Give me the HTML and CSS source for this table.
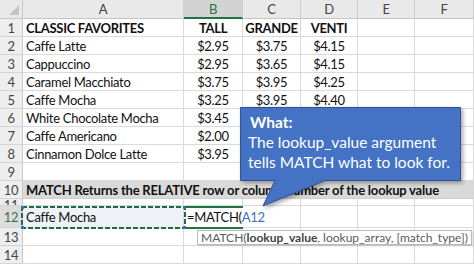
FILE: index.html
```html
<!DOCTYPE html>
<html>
<head>
<meta charset="utf-8">
<link rel="stylesheet" href="styles.css">
</head>
<body>
<div class="sheet">
  <div class="c corner"><svg class="tri" width="10" height="10" viewBox="0 0 10 10"><polygon points="10,0 10,10 0,10" fill="#c4c4c4"/></svg></div>
  <div class="c ch">A</div>
  <div class="c ch sel">B</div>
  <div class="c ch">C</div>
  <div class="c ch">D</div>
  <div class="c ch">E</div>
  <div class="c ch">F</div>

  <div class="c rh">1</div>
  <div class="c b">CLASSIC FAVORITES</div>
  <div class="c ctr b">TALL</div>
  <div class="c ctr b">GRANDE</div>
  <div class="c ctr b">VENTI</div>
  <div class="c"></div>
  <div class="c"></div>

  <div class="c rh">2</div>
  <div class="c">Caffe Latte</div>
  <div class="c ctr">$2.95</div>
  <div class="c ctr">$3.75</div>
  <div class="c ctr">$4.15</div>
  <div class="c"></div>
  <div class="c"></div>

  <div class="c rh">3</div>
  <div class="c">Cappuccino</div>
  <div class="c ctr">$2.95</div>
  <div class="c ctr">$3.65</div>
  <div class="c ctr">$4.15</div>
  <div class="c"></div>
  <div class="c"></div>

  <div class="c rh">4</div>
  <div class="c">Caramel Macchiato</div>
  <div class="c ctr">$3.75</div>
  <div class="c ctr">$3.95</div>
  <div class="c ctr">$4.25</div>
  <div class="c"></div>
  <div class="c"></div>

  <div class="c rh">5</div>
  <div class="c">Caffe Mocha</div>
  <div class="c ctr">$3.25</div>
  <div class="c ctr">$3.95</div>
  <div class="c ctr">$4.40</div>
  <div class="c"></div>
  <div class="c"></div>

  <div class="c rh">6</div>
  <div class="c">White Chocolate Mocha</div>
  <div class="c ctr">$3.45</div>
  <div class="c ctr"></div>
  <div class="c ctr"></div>
  <div class="c"></div>
  <div class="c"></div>

  <div class="c rh">7</div>
  <div class="c">Caffe Americano</div>
  <div class="c ctr">$2.00</div>
  <div class="c ctr"></div>
  <div class="c ctr"></div>
  <div class="c"></div>
  <div class="c"></div>

  <div class="c rh">8</div>
  <div class="c">Cinnamon Dolce Latte</div>
  <div class="c ctr">$3.95</div>
  <div class="c ctr"></div>
  <div class="c ctr"></div>
  <div class="c"></div>
  <div class="c"></div>

  <div class="c rh">9</div>
  <div class="c"></div>
  <div class="c"></div>
  <div class="c"></div>
  <div class="c"></div>
  <div class="c"></div>
  <div class="c"></div>

  <div class="c rh">10</div>
  <div class="c b band">MATCH Returns the RELATIVE row or column number of the lookup value</div>

  <div class="c rh tiny">11</div>
  <div class="c"></div>
  <div class="c"></div>
  <div class="c"></div>
  <div class="c"></div>
  <div class="c"></div>
  <div class="c"></div>

  <div class="c rh rsel">12</div>
  <div class="c ref">Caffe Mocha</div>
  <div class="c edit">=MATCH(<span class="refc">A12</span></div>
  <div class="c"></div>
  <div class="c"></div>
  <div class="c"></div>
  <div class="c"></div>

  <div class="c rh">13</div>
  <div class="c"></div>
  <div class="c"></div>
  <div class="c"></div>
  <div class="c"></div>
  <div class="c"></div>
  <div class="c"></div>

  <div class="c rh">14</div>
  <div class="c"></div>
  <div class="c"></div>
  <div class="c"></div>
  <div class="c"></div>
  <div class="c"></div>
  <div class="c"></div>

  <svg class="ants" width="170" height="30" viewBox="0 0 170 30">
    <rect x="1" y="1" width="163" height="21" fill="none" stroke="#1f6b46" stroke-width="2" stroke-dasharray="5 2"/>
    <rect x="0" y="0" width="3" height="3" fill="#3d6fc0"/>
    <rect x="162" y="0" width="3" height="3" fill="#3d6fc0"/>
    <rect x="0" y="20" width="3" height="3" fill="#3d6fc0"/>
    <rect x="162" y="20" width="3" height="3" fill="#3d6fc0"/>
  </svg>
  <div class="active"></div>

  <div class="tip">MATCH(<b>lookup_value</b>, lookup_array, [match_type])</div>

  <div class="callout">
    <svg class="shape" width="230" height="104" viewBox="0 0 230 104">
      <path d="M0.5 0.5 H220.5 V73.5 H85 L23 99 L35 73.5 H0.5 Z" fill="#4472c4" stroke="#2f528f" stroke-width="1"/>
    </svg>
    <div class="ctext">
      <div class="what">What:</div>
      <div>The lookup_value argument</div>
      <div>tells MATCH what to look for.</div>
    </div>
  </div>
</div>
</body>
</html>
```

FILE: styles.css
```css
html, body {
  margin: 0;
  padding: 0;
  background: #ffffff;
  overflow: hidden;
}

.sheet {
  position: relative;
  width: 474px;
  height: 264px;
  display: grid;
  grid-template-columns: 23px 161px 59px 58px 57px 57px 59px;
  grid-template-rows: 19px repeat(10, 18px) 7px 22px 18px 18px;
  font-family: Lato, "Open Sans", sans-serif;
  font-size: 13px;
  letter-spacing: -0.3px;
  color: #111;
  overflow: hidden;
}

.c {
  box-sizing: border-box;
  border-right: 1px solid #dadada;
  border-bottom: 1px solid #dadada;
  padding: 0 3px;
  display: flex;
  align-items: center;
  white-space: nowrap;
  overflow: hidden;
}

.ctr { justify-content: center; }
.b { font-weight: 700; }

.corner {
  background: #e9e9e9;
  border-color: #c8c8c8;
  position: relative;
}
.tri {
  position: absolute;
  right: 3px;
  bottom: 3px;
}

.ch {
  background: #e9e9e9;
  border-right-color: #cfcfcf;
  border-bottom-color: #c4c4c4;
  justify-content: center;
  color: #444;
}
.ch.sel {
  background: #d3d3d3;
  color: #217346;
  border-bottom: 2px solid #217346;
}

.rh {
  background: #eeeeee;
  border-right-color: #c8c8c8;
  border-bottom-color: #d4d4d4;
  justify-content: center;
  color: #444;
  padding: 0;
}
.rh.tiny {
  align-items: flex-start;
  line-height: 12px;
}
.rh.rsel {
  background: #dcdcdc;
  color: #3f6f56;
}

.band {
  grid-column: 2 / span 6;
  background: #d9d9d9;
  border-right: none;
  border-bottom-color: #cfcfcf;
  letter-spacing: -0.2px;
}

.ref {
  background: #eef1f6;
}

.edit {
  overflow: visible;
  position: relative;
  z-index: 1;
  border-right-color: #ffffff;
  padding-left: 3px;
}
.refc { color: #3c6ec5; }

.ants {
  position: absolute;
  left: 21px;
  top: 206px;
  overflow: visible;
  z-index: 2;
}

.active {
  position: absolute;
  left: 185px;
  top: 206px;
  width: 58px;
  height: 19px;
  border-top: 2px solid #217346;
  border-bottom: 2px solid #217346;
  z-index: 2;
}

.tip {
  position: absolute;
  left: 197px;
  top: 230px;
  height: 15px;
  box-sizing: border-box;
  padding: 0 3px 0 3px;
  border: 1px solid #b9b9b9;
  background: #ffffff;
  color: #5a5a5a;
  font-size: 12px;
  letter-spacing: 0;
  line-height: 13px;
  white-space: nowrap;
  box-shadow: 1px 1px 2px rgba(0,0,0,0.15);
  z-index: 3;
}
.tip b {
  color: #444;
}

.callout {
  position: absolute;
  left: 240px;
  top: 107px;
  width: 221px;
  height: 74px;
  z-index: 4;
  color: #ffffff;
  font-size: 15.5px;
  letter-spacing: 0;
  line-height: 20px;
}
.shape {
  position: absolute;
  left: 0;
  top: 0;
  filter: drop-shadow(2px 2px 2px rgba(0,0,0,0.35));
}
.ctext {
  position: relative;
  padding: 5px 0 0 8px;
}
.what {
  font-weight: 700;
  padding-left: 2px;
}
```
